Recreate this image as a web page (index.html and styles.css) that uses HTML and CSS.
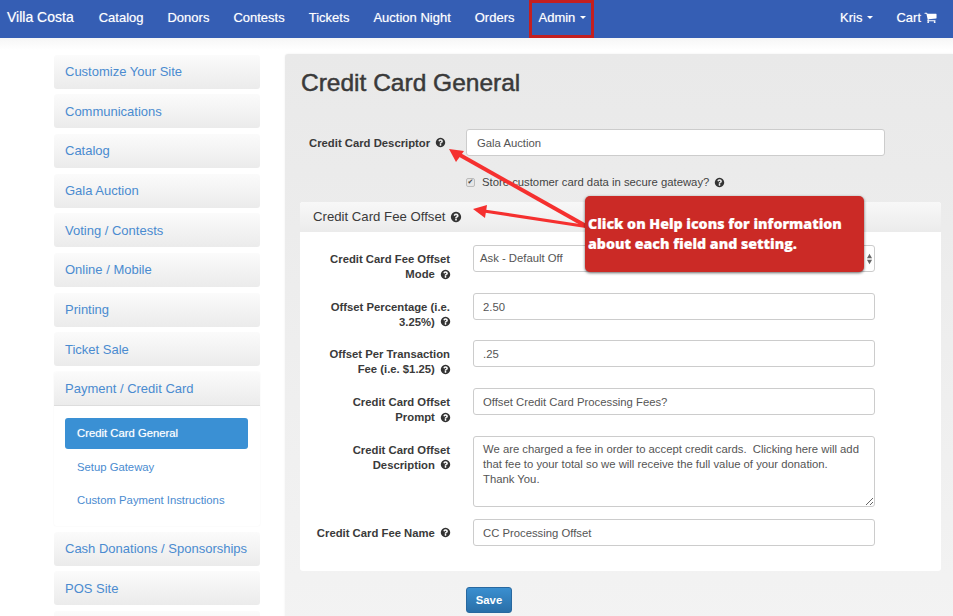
FILE: index.html
```html
<!DOCTYPE html>
<html lang="en">
<head>
  <meta charset="UTF-8">
  <meta name="viewport" content="width=device-width, initial-scale=1.0">
  <title>Credit Card General</title>
  <link rel="stylesheet" href="styles.css">
</head>
<body>

  <svg class="icon-defs" width="0" height="0">
    <symbol id="help" viewBox="0 0 1792 1792">
      <path d="M1024 1376v-192q0-14-9-23t-23-9h-192q-14 0-23 9t-9 23v192q0 14 9 23t23 9h192q14 0 23-9t9-23zm256-672q0-88-55.5-163t-138.5-116-170-41q-243 0-371 213-15 24 8 42l132 100q7 6 19 6 16 0 25-12 53-68 86-92 34-24 86-24 48 0 85.5 26t37.5 59q0 38-20 61t-68 45q-63 28-115.5 86.5t-52.5 125.5v36q0 14 9 23t23 9h192q14 0 23-9t9-23q0-19 21.5-49.5t54.5-49.5q32-18 49-28.5t46-35 44.5-48 28-60.5 12.5-81zm384 192q0 209-103 385.5t-279.5 279.5-385.5 103-385.5-103-279.5-279.5-103-385.5 103-385.5 279.5-279.5 385.5-103 385.5 103 279.5 279.5 103 385.5z"/>
    </symbol>
    <symbol id="cart" viewBox="0 0 1792 1792">
      <path d="M704 1536q0 52-38 90t-90 38-90-38-38-90 38-90 90-38 90 38 38 90zm896 0q0 52-38 90t-90 38-90-38-38-90 38-90 90-38 90 38 38 90zm128-1088v512q0 24-16.5 42.5t-40.5 21.5l-1044 122q13 60 13 70 0 16-24 64h920q26 0 45 19t19 45-19 45-45 19h-1024q-26 0-45-19t-19-45q0-11 8-31.5t16-36 21.5-40 15.5-29.5l-177-823h-204q-26 0-45-19t-19-45 19-45 45-19h256q16 0 28.5 6t19.5 14.5 13 23 8 26.5 6 31 5.5 29h1201q26 0 45 19t19 45z"/>
    </symbol>
  </svg>

  <!-- Top nav -->
  <nav class="navbar">
    <a class="brand" href="#">Villa Costa</a>
    <a class="nav-link" href="#">Catalog</a>
    <a class="nav-link" href="#">Donors</a>
    <a class="nav-link" href="#">Contests</a>
    <a class="nav-link" href="#">Tickets</a>
    <a class="nav-link" href="#">Auction Night</a>
    <a class="nav-link" href="#">Orders</a>
    <a class="nav-link admin-link" href="#">Admin <span class="caret"></span></a>
    <a class="nav-link push-right" href="#">Kris <span class="caret"></span></a>
    <a class="nav-link cart-link" href="#">Cart <svg class="cart-icon"><use href="#cart"/></svg></a>
  </nav>

  <div class="page">

    <!-- Sidebar -->
    <aside class="sidebar">
      <a class="side-head" href="#">Customize Your Site</a>
      <a class="side-head" href="#">Communications</a>
      <a class="side-head" href="#">Catalog</a>
      <a class="side-head" href="#">Gala Auction</a>
      <a class="side-head" href="#">Voting / Contests</a>
      <a class="side-head" href="#">Online / Mobile</a>
      <a class="side-head" href="#">Printing</a>
      <a class="side-head" href="#">Ticket Sale</a>
      <div class="side-group">
        <a class="side-head" href="#">Payment / Credit Card</a>
        <div class="side-sub">
          <a class="sub-link active" href="#">Credit Card General</a>
          <a class="sub-link" href="#">Setup Gateway</a>
          <a class="sub-link" href="#">Custom Payment Instructions</a>
        </div>
      </div>
      <a class="side-head" href="#">Cash Donations / Sponsorships</a>
      <a class="side-head" href="#">POS Site</a>
      <a class="side-head" href="#"></a>
    </aside>

    <!-- Main panel -->
    <main class="panel">
      <h1>Credit Card General</h1>

      <div class="top-row">
        <label class="top-label">Credit Card Descriptor <svg class="help"><use href="#help"/></svg></label>
        <input class="field top-field" type="text" value="Gala Auction">
      </div>

      <div class="check-row">
        <span class="fake-check">&#10004;</span>
        <span>Store customer card data in secure gateway? <svg class="help"><use href="#help"/></svg></span>
      </div>

      <section class="card">
        <div class="card-head">Credit Card Fee Offset <svg class="help help-lg"><use href="#help"/></svg></div>
        <div class="card-body">

          <div class="form-row">
            <label>Credit Card Fee Offset<br>Mode <svg class="help"><use href="#help"/></svg></label>
            <div class="field select-field">Ask - Default Off
              <svg class="updown" viewBox="0 0 8 14"><path d="M4 1l3 5H1zM4 13L1 8h6z"/></svg>
            </div>
          </div>

          <div class="form-row">
            <label>Offset Percentage (i.e.<br>3.25%) <svg class="help"><use href="#help"/></svg></label>
            <input class="field" type="text" value="2.50">
          </div>

          <div class="form-row">
            <label>Offset Per Transaction<br>Fee (i.e. $1.25) <svg class="help"><use href="#help"/></svg></label>
            <input class="field" type="text" value=".25">
          </div>

          <div class="form-row">
            <label>Credit Card Offset<br>Prompt <svg class="help"><use href="#help"/></svg></label>
            <input class="field" type="text" value="Offset Credit Card Processing Fees?">
          </div>

          <div class="form-row form-row-area">
            <label>Credit Card Offset<br>Description <svg class="help"><use href="#help"/></svg></label>
            <textarea class="field area-field">We are charged a fee in order to accept credit cards.  Clicking here will add that fee to your total so we will receive the full value of your donation.
Thank You.</textarea>
          </div>

          <div class="form-row form-row-last">
            <label>Credit Card Fee Name <svg class="help"><use href="#help"/></svg></label>
            <input class="field" type="text" value="CC Processing Offset">
          </div>

        </div>
      </section>

      <button class="save-btn">Save</button>
    </main>
  </div>

  <!-- Annotation drawn over the screenshot -->
  <svg class="arrows" viewBox="0 0 953 616">
    <polygon points="458,156.2 460,152.8 587,224.3 585,227.7" class="arrow-red"/>
    <polygon points="449,149 464,151 456,162" class="arrow-red"/>
    <polygon points="483.8,212.6 484.2,209.4 586.2,224.9 585.8,228.1" class="arrow-red"/>
    <polygon points="473,209 487,205 485,218" class="arrow-red"/>
  </svg>
  <div class="callout">Click on Help icons for information about each field and setting.</div>

</body>
</html>
```

FILE: styles.css
```css
* {
  box-sizing: border-box;
}

html, body {
  margin: 0;
  padding: 0;
  height: 616px;
  overflow: hidden;
  background: #fff;
  font-family: "Liberation Sans", Arial, sans-serif;
  color: #444;
}

a {
  text-decoration: none;
}

.icon-defs {
  position: absolute;
}

.navbar {
  display: flex;
  align-items: stretch;
  height: 38px;
  background: #355eb4;
}

.brand, .nav-link {
  display: flex;
  align-items: center;
  color: #fff;
  font-size: 13px;
  text-shadow: 0 0 1px rgba(255, 255, 255, 0.5);
}

.brand {
  padding: 0 13px 4px 7px;
  font-size: 14px;
}

.nav-link {
  padding: 0 12px 4px;
  white-space: nowrap;
}

.admin-link {
  margin-left: 3px;
  padding: 0 8px 4px 9px;
  width: 65px;
  box-shadow: inset 0 0 0 3px #c41f1f;
}

.push-right {
  margin-left: auto;
  padding-right: 11px;
}

.cart-link {
  padding-right: 16px;
}

.caret {
  display: inline-block;
  margin-left: 5px;
  border-top: 3px solid #fff;
  border-left: 3px solid transparent;
  border-right: 3px solid transparent;
}

.cart-icon {
  width: 13px;
  height: 13px;
  margin-left: 3px;
  fill: #fff;
}

.page {
  display: flex;
  align-items: flex-start;
  padding-top: 16px;
  background: linear-gradient(#f6f6f6, #fff 12px);
}

.sidebar {
  display: flex;
  flex-direction: column;
  gap: 5.7px;
  width: 206px;
  margin: 0.5px 25px 0 54px;
  flex-shrink: 0;
}

.side-head {
  display: flex;
  align-items: center;
  height: 34px;
  padding: 0 11px;
  border-radius: 3px;
  background: linear-gradient(#fbfbfb, #ebebeb);
  color: #4a8bd0;
  font-size: 13px;
  white-space: nowrap;
  flex-shrink: 0;
}

.side-group {
  background: #fff;
  border-radius: 3px;
  box-shadow: 0 0 2px rgba(0, 0, 0, 0.06);
}

.side-group .side-head {
  border-bottom: 1px solid #ddd;
  border-radius: 3px 3px 0 0;
}

.side-sub {
  display: flex;
  flex-direction: column;
  height: 120px;
  padding: 11.5px 12px 0 11px;
}

.sub-link {
  display: flex;
  align-items: center;
  height: 33px;
  padding: 0 12px;
  border-radius: 3px;
  color: #4a8bd0;
  font-size: 11.3px;
}

.sub-link.active {
  height: 31px;
  margin-bottom: 2px;
  background: #3a90d4;
  color: #fff;
  text-shadow: 0 0 1px rgba(255, 255, 255, 0.6);
}

.panel {
  flex: 1;
  height: 580px;
  padding: 0 12px 0 15px;
  border-radius: 3px 0 0 0;
  background: linear-gradient(#e9e9e9, #f3f3f3);
  box-shadow: 0 0 2px rgba(0, 0, 0, 0.08);
}

h1 {
  margin: 0;
  padding: 14px 0 0 1px;
  height: 75px;
  color: #3a3a3a;
  font-size: 24.5px;
  font-weight: normal;
  line-height: 30px;
  -webkit-text-stroke: 0.5px #3a3a3a;
}

.top-row {
  display: flex;
  align-items: center;
  height: 27px;
}

.top-label {
  width: 166px;
  padding-left: 9px;
  color: #3a3a3a;
  font-size: 11.3px;
  font-weight: bold;
  white-space: nowrap;
}

.help {
  width: 11px;
  height: 11px;
  margin-left: 2px;
  vertical-align: -1.5px;
  fill: #333;
}

.help-lg {
  width: 12px;
  height: 12px;
  margin-left: 1px;
  vertical-align: -2px;
}

.field {
  display: block;
  width: 402px;
  height: 27px;
  padding: 0 9px;
  border: 1px solid #ccc;
  border-radius: 3px;
  background: #fff;
  color: #555;
  font-family: "Liberation Sans", Arial, sans-serif;
  font-size: 11.3px;
  line-height: 25px;
}

.top-field {
  width: 419px;
  padding: 0 10px;
}

.check-row {
  display: flex;
  align-items: center;
  gap: 7px;
  height: 20px;
  margin: 16px 0 10px 166px;
  color: #444;
  font-size: 11.3px;
  white-space: nowrap;
}

.fake-check {
  display: flex;
  align-items: center;
  justify-content: center;
  width: 9px;
  height: 9px;
  border: 1px solid #bbb;
  border-radius: 2px;
  background: #e6e6e6;
  color: #444;
  font-family: "DejaVu Sans", sans-serif;
  font-size: 7px;
}

.card {
  width: 641px;
  border-radius: 3px;
  background: #fff;
}

.card-head {
  height: 30px;
  padding-left: 13px;
  border-radius: 3px 3px 0 0;
  background: linear-gradient(#f8f8f8, #ebebeb);
  color: #3a3a3a;
  font-size: 13.2px;
  line-height: 29px;
}

.card-body {
  padding: 13px 66px 25px 0;
}

.form-row {
  display: flex;
  justify-content: space-between;
  height: 27px;
  margin-bottom: 20.7px;
}

.form-row label {
  width: 150px;
  padding-top: 7px;
  text-align: right;
  color: #3a3a3a;
  font-size: 11.3px;
  font-weight: bold;
  line-height: 15px;
  white-space: nowrap;
}

.form-row .help {
  margin-right: -1px;
}

.form-row-area {
  height: 71px;
  margin-bottom: 12px;
}

.form-row-last {
  margin-bottom: 0;
}

.select-field {
  position: relative;
  padding: 0 6px;
}

.updown {
  position: absolute;
  right: 1px;
  top: 7px;
  width: 7px;
  height: 12px;
  fill: #666;
}

input.field {
  margin: 0;
  outline: none;
}

.form-row input.field {
  padding-top: 1px;
}

.area-field {
  height: 71px;
  padding: 5px 9px;
  margin: 0;
  line-height: 15px;
  resize: both;
  outline: none;
  overflow: hidden;
}

.save-btn {
  display: block;
  width: 46px;
  height: 26px;
  margin: 16px 0 0 166px;
  padding: 0;
  border: 1px solid #28689f;
  border-radius: 3px;
  background: linear-gradient(#3a8fd0, #2a6fa8);
  color: #fff;
  font-family: "Liberation Sans", Arial, sans-serif;
  font-size: 11.3px;
  font-weight: bold;
}

/* annotation layer */
.arrows {
  position: absolute;
  left: 0;
  top: 0;
  width: 953px;
  height: 616px;
  pointer-events: none;
}

.arrow-red {
  fill: #f5302f;
}

.callout {
  position: absolute;
  left: 585px;
  top: 196px;
  width: 279px;
  height: 76px;
  padding: 18px 3px 0;
  border-radius: 5px;
  background: #cb2a26;
  box-shadow: 0 1px 3px rgba(0, 0, 0, 0.6);
  color: #fff;
  font-family: "Open Sans", sans-serif;
  font-size: 14.2px;
  font-weight: 800;
  line-height: 20px;
  -webkit-text-stroke: 0.2px #fff;
}
```
